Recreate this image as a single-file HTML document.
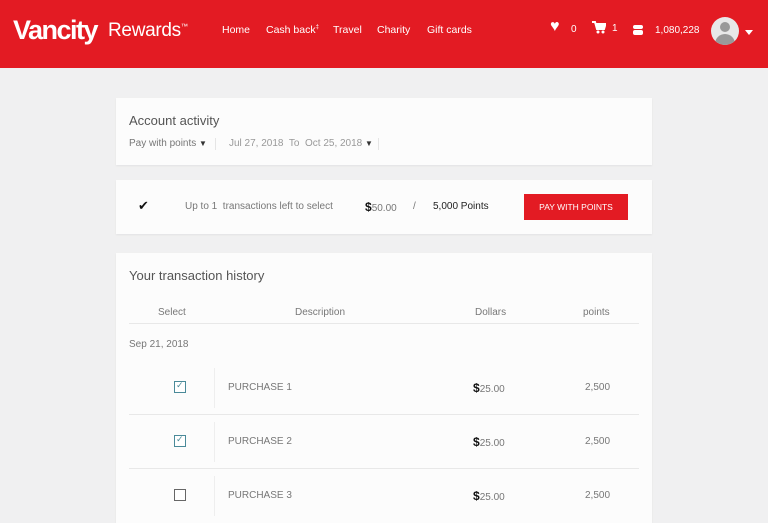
<!DOCTYPE html><html><head><style>
*{margin:0;padding:0;box-sizing:border-box}
body{width:768px;height:511px;overflow:hidden;background:#f0f0f1;font-family:"Liberation Sans",sans-serif;position:relative}
.a{position:absolute;white-space:nowrap}
.hd{position:absolute;left:0;top:0;width:768px;height:68px;background:#e31b23;color:#fff}
.card{position:absolute;left:116px;width:536px;background:#fcfcfc;box-shadow:0 1px 2px rgba(0,0,0,.06)}
.g{color:#777}
.cb{position:absolute;width:12px;height:12px;border:1.5px solid #4a8a99;background:#fff}
.cb.off{border-color:#666}
.hr{position:absolute;left:13px;width:510px;height:1px;background:#e8e8e8}
</style></head><body>
<div class="hd">
<div class="a" style="left:13px;top:15px;font-size:27px;font-weight:bold;letter-spacing:-1.5px">Vancity</div>
<div class="a" style="left:108px;top:20px;font-size:19px;letter-spacing:-0.3px">Rewards<sup style="font-size:7px">™</sup></div>
<div class="a" style="left:222px;top:24px;font-size:10.5px">Home</div>
<div class="a" style="left:266px;top:24px;font-size:10.5px">Cash back<sup style="font-size:6px">‡</sup></div>
<div class="a" style="left:333px;top:24px;font-size:10.5px">Travel</div>
<div class="a" style="left:377px;top:24px;font-size:10.5px">Charity</div>
<div class="a" style="left:427px;top:24px;font-size:10.5px">Gift cards</div>
<div class="a" style="left:550px;top:18px;font-size:16px">♥</div>
<div class="a" style="left:571px;top:24px;font-size:10px">0</div>
<svg class="a" style="left:592px;top:21px" width="14" height="13" viewBox="0 0 14 13"><path d="M0 1h3l2 7h7l1.5-5H4" fill="#fff" stroke="#fff" stroke-width="2"/><circle cx="6" cy="11" r="1.5" fill="#fff"/><circle cx="11" cy="11" r="1.5" fill="#fff"/></svg>
<div class="a" style="left:612px;top:23px;font-size:10px">1</div>
<svg class="a" style="left:632px;top:24px" width="12" height="12"><rect x="1" y="1" width="10" height="4" rx="2" fill="#fff"/><rect x="1" y="6" width="10" height="5" rx="2" fill="#fff"/></svg>
<div class="a" style="left:655px;top:25px;font-size:10px">1,080,228</div>
<div class="a" style="left:711px;top:17px;width:28px;height:28px;border-radius:50%;background:#e8e8e8;overflow:hidden"><div class="a" style="left:9px;top:5px;width:10px;height:10px;border-radius:50%;background:#999"></div><div class="a" style="left:4px;top:17px;width:20px;height:14px;border-radius:10px 10px 0 0;background:#999"></div></div>
<div class="a" style="left:745px;top:30px;border:4px solid transparent;border-top:5px solid #fff"></div>
</div>

<div class="card" style="top:98px;height:67px">
<div class="a" style="left:13px;top:15px;font-size:13px;color:#555">Account activity</div>
<div class="a g" style="left:13px;top:40px;font-size:10px">Pay with points <span style="font-size:8px;color:#333">▼</span></div>
<div class="a" style="left:99px;top:40px;width:1px;height:12px;background:#e5e5e5"></div>
<div class="a" style="left:113px;top:40px;font-size:10px;color:#999">Jul 27, 2018&nbsp; To &nbsp;Oct 25, 2018 <span style="font-size:8px;color:#333">▼</span></div>
<div class="a" style="left:262px;top:40px;width:1px;height:12px;background:#e5e5e5"></div>
</div>

<div class="card" style="top:180px;height:54px">
<div class="a" style="left:22px;top:18px;font-size:13px;color:#111">✔</div>
<div class="a g" style="left:69px;top:21px;font-size:10px">Up to 1&nbsp; transactions left to select</div>
<div class="a" style="left:249px;top:20px;font-size:10px;color:#777"><b style="color:#111;font-size:12px">$</b>50.00</div>
<div class="a g" style="left:297px;top:21px;font-size:10px">/</div>
<div class="a" style="left:317px;top:21px;font-size:10px;color:#222">5,000 Points</div>
<div class="a" style="left:408px;top:14px;width:104px;height:26px;background:#e31b23;color:#fff;font-size:8.5px;text-align:center;line-height:26px">PAY WITH POINTS</div>
</div>

<div class="card" style="top:253px;height:270px">
<div class="a" style="left:13px;top:15px;font-size:13px;color:#555">Your transaction history</div>
<div class="a g" style="left:42px;top:54px;font-size:10px">Select</div>
<div class="a g" style="left:179px;top:54px;font-size:10px">Description</div>
<div class="a g" style="left:359px;top:54px;font-size:10px">Dollars</div>
<div class="a g" style="left:467px;top:54px;font-size:10px">points</div>
<div class="hr" style="top:70px"></div>
<div class="a g" style="left:13px;top:86px;font-size:10px">Sep 21, 2018</div>

<div class="cb" style="left:58px;top:128px"><span class="a" style="left:1px;top:-2px;font-size:9px;color:#4a8a99">✓</span></div>
<div class="a" style="left:98px;top:115px;width:1px;height:40px;background:#eee"></div>
<div class="a g" style="left:112px;top:129px;font-size:10px">PURCHASE 1</div>
<div class="a g" style="left:357px;top:128px;font-size:10px"><b style="color:#111;font-size:12px">$</b>25.00</div>
<div class="a g" style="left:469px;top:129px;font-size:10px">2,500</div>
<div class="hr" style="top:161px"></div>

<div class="cb" style="left:58px;top:182px"><span class="a" style="left:1px;top:-2px;font-size:9px;color:#4a8a99">✓</span></div>
<div class="a" style="left:98px;top:169px;width:1px;height:40px;background:#eee"></div>
<div class="a g" style="left:112px;top:183px;font-size:10px">PURCHASE 2</div>
<div class="a g" style="left:357px;top:182px;font-size:10px"><b style="color:#111;font-size:12px">$</b>25.00</div>
<div class="a g" style="left:469px;top:183px;font-size:10px">2,500</div>
<div class="hr" style="top:215px"></div>

<div class="cb off" style="left:58px;top:236px"></div>
<div class="a" style="left:98px;top:223px;width:1px;height:40px;background:#eee"></div>
<div class="a g" style="left:112px;top:237px;font-size:10px">PURCHASE 3</div>
<div class="a g" style="left:357px;top:236px;font-size:10px"><b style="color:#111;font-size:12px">$</b>25.00</div>
<div class="a g" style="left:469px;top:237px;font-size:10px">2,500</div>
</div>
</body></html>
